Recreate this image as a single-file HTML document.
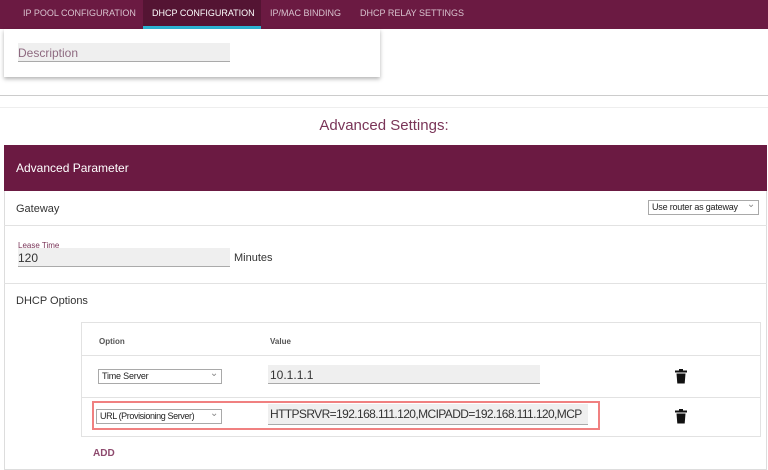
<!DOCTYPE html>
<html><head><style>
*{box-sizing:border-box;margin:0;padding:0}
body{width:768px;height:470px;overflow:hidden;background:#fff;font-family:"Liberation Sans",sans-serif;position:relative;color:#333}
.abs{position:absolute}
.nav{left:0;top:0;width:768px;height:29px;background:#6b1a42}
.tab{position:absolute;top:0;height:29px;line-height:26px;font-size:9px;color:#d9c3cf;white-space:nowrap}
.sel{position:absolute;border:1px solid #a9a9a9;background:#fff;font-size:9px;color:#222;padding-left:3px;line-height:13px;height:15px;white-space:nowrap;overflow:hidden;letter-spacing:-0.2px}
.sel:after{content:"⌄";position:absolute;right:3px;top:-3px;color:#888;font-size:10px;background:#fff}
.inp{position:absolute;background:#efefef;border-bottom:1px solid #aaa}
</style></head><body>
<div class="abs nav"></div>
<div class="tab" style="left:23px">IP POOL CONFIGURATION</div>
<div class="abs" style="left:143px;top:0;width:118px;height:29px;background:#541433;border-bottom:3px solid #2cb5d4"></div>
<div class="tab" style="left:152px;color:#fff">DHCP CONFIGURATION</div>
<div class="tab" style="left:270px">IP/MAC BINDING</div>
<div class="tab" style="left:360px">DHCP RELAY SETTINGS</div>

<div class="abs" style="left:4px;top:29px;width:376px;height:48px;background:#fff;box-shadow:0 2px 4px rgba(0,0,0,.3)"></div>
<div class="inp" style="left:18px;top:43px;width:212px;height:19px"></div>
<div class="abs" style="left:18px;top:46px;font-size:12px;color:#8e6a80">Description</div>

<div class="abs" style="left:0;top:95px;width:768px;height:1px;background:#ccc"></div>
<div class="abs" style="left:0;top:107px;width:768px;height:1px;background:#eee"></div>
<div class="abs" style="left:0;top:117px;width:768px;text-align:center;font-size:15px;color:#7a3558">Advanced Settings:</div>

<div class="abs" style="left:4px;top:145px;width:763px;height:325px;border:1px solid #ddd;border-top:none"></div>
<div class="abs" style="left:4px;top:145px;width:763px;height:46px;background:#6b1a42"></div>
<div class="abs" style="left:16px;top:161px;font-size:12px;color:#fff">Advanced Parameter</div>
<div class="abs" style="left:16px;top:203px;font-size:11px">Gateway</div>
<div class="sel" style="left:648px;top:200px;width:111px;padding-right:14px">Use router as gateway</div>
<div class="abs" style="left:4px;top:225px;width:763px;height:1px;background:#e2e2e2"></div>
<div class="abs" style="left:18px;top:241px;font-size:8px;color:#7a3558">Lease Time</div>
<div class="inp" style="left:18px;top:248px;width:212px;height:19px"></div>
<div class="abs" style="left:18px;top:251px;font-size:12px">120</div>
<div class="abs" style="left:234px;top:252px;font-size:11px">Minutes</div>
<div class="abs" style="left:4px;top:283px;width:763px;height:1px;background:#e2e2e2"></div>
<div class="abs" style="left:16px;top:295px;font-size:11px">DHCP Options</div>

<div class="abs" style="left:81px;top:322px;width:680px;height:115px;border:1px solid #e2e2e2"></div>
<div class="abs" style="left:99px;top:337px;font-size:8px;color:#555;font-weight:bold">Option</div>
<div class="abs" style="left:270px;top:337px;font-size:8px;color:#555;font-weight:bold">Value</div>
<div class="abs" style="left:81px;top:355px;width:680px;height:1px;background:#e2e2e2"></div>
<div class="abs" style="left:81px;top:397px;width:680px;height:1px;background:#e2e2e2"></div>
<div class="sel" style="left:98px;top:369px;width:124px">Time Server</div>
<div class="inp" style="left:268px;top:365px;width:272px;height:19px"></div>
<div class="abs" style="left:270px;top:368px;font-size:12px">10.1.1.1</div>
<div class="abs" style="left:92px;top:401px;width:508px;height:29px;border:2px solid #f08080"></div>
<div class="sel" style="left:96px;top:409px;width:126px;letter-spacing:-0.4px">URL (Provisioning Server)</div>
<div class="inp" style="left:268px;top:404px;width:320px;height:21px;overflow:hidden"><span style="position:absolute;left:2px;top:3px;font-size:12px;white-space:nowrap;letter-spacing:-0.6px">HTTPSRVR=192.168.111.120,MCIPADD=192.168.111.120,MCP</span></div>
<svg class="abs" style="left:675px;top:369px" width="12" height="15" viewBox="0 0 12 15"><rect x="0" y="1.5" width="12" height="2" fill="#111"/><rect x="4" y="0" width="4" height="2" fill="#111"/><path d="M1.5 4.5h9l-.8 10h-7.4z" fill="#111"/></svg>
<svg class="abs" style="left:675px;top:409px" width="12" height="15" viewBox="0 0 12 15"><rect x="0" y="1.5" width="12" height="2" fill="#111"/><rect x="4" y="0" width="4" height="2" fill="#111"/><path d="M1.5 4.5h9l-.8 10h-7.4z" fill="#111"/></svg>
<div class="abs" style="left:93px;top:448px;font-size:10px;font-weight:bold;color:#8e4a6e">ADD</div>
</body></html>
